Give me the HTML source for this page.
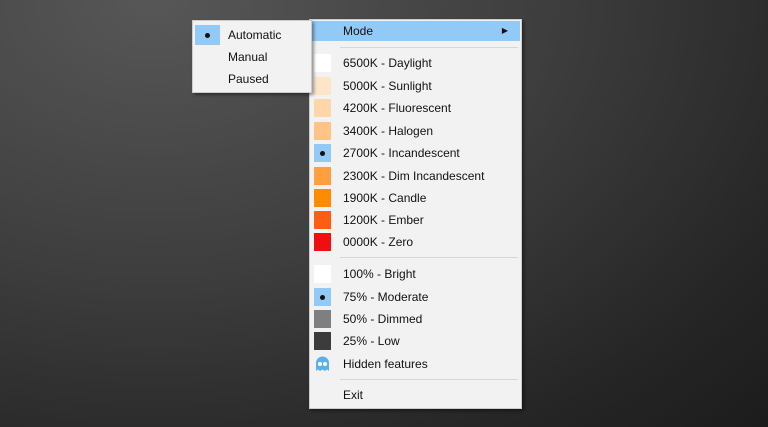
<!DOCTYPE html>
<html><head><style>
body{margin:0;width:768px;height:427px;overflow:hidden;background:radial-gradient(ellipse at 20% 0%,#575757 0%,#3e3e3e 45%,#262626 80%,#1c1c1c 100%);font-family:"Liberation Sans",sans-serif;font-size:12px;color:#111;position:relative}
.m{position:absolute;background:#f2f2f2;border:1px solid #ccc;box-shadow:2px 2px 3px rgba(0,0,0,.4)}
.i{position:absolute;left:0;right:0;height:22px;line-height:22px}
.t{position:absolute;left:33px}
.s{position:absolute;left:4px;top:2px;width:17px;height:18px}
.sel{background:#91c9f7}
.dot::after{content:"";position:absolute;left:6px;top:7px;width:5px;height:5px;border-radius:50%;background:#111}
.sep{position:absolute;left:30px;right:3px;height:1px;background:#d7d7d7}
</style></head><body>
<div class="m" style="left:309px;top:19px;width:211px;height:388px">
<div class="i sel" style="top:1px;left:1px;right:1px;height:20px;line-height:20px"><span class="t" style="left:32px">Mode</span><span style="position:absolute;right:12px;top:0;font-size:8px">&#9654;</span></div>
<div class="sep" style="top:27px"></div>
<div class="i" style="top:32px"><div class="s" style="background:#fff"></div><span class="t">6500K - Daylight</span></div>
<div class="i" style="top:55px"><div class="s" style="background:#fde5c8"></div><span class="t">5000K - Sunlight</span></div>
<div class="i" style="top:77px"><div class="s" style="background:#ffd5aa"></div><span class="t">4200K - Fluorescent</span></div>
<div class="i" style="top:100px"><div class="s" style="background:#ffc485"></div><span class="t">3400K - Halogen</span></div>
<div class="i" style="top:122px"><div class="s sel dot"></div><span class="t">2700K - Incandescent</span></div>
<div class="i" style="top:145px"><div class="s" style="background:#ff9f40"></div><span class="t">2300K - Dim Incandescent</span></div>
<div class="i" style="top:167px"><div class="s" style="background:#ff8c00"></div><span class="t">1900K - Candle</span></div>
<div class="i" style="top:189px"><div class="s" style="background:#ff5c14"></div><span class="t">1200K - Ember</span></div>
<div class="i" style="top:211px"><div class="s" style="background:#ee1010"></div><span class="t">0000K - Zero</span></div>
<div class="sep" style="top:237px"></div>
<div class="i" style="top:243px"><div class="s" style="background:#fff"></div><span class="t">100% - Bright</span></div>
<div class="i" style="top:266px"><div class="s sel dot"></div><span class="t">75% - Moderate</span></div>
<div class="i" style="top:288px"><div class="s" style="background:#7f7f7f"></div><span class="t">50% - Dimmed</span></div>
<div class="i" style="top:310px"><div class="s" style="background:#3c3c3c"></div><span class="t">25% - Low</span></div>
<div class="i" style="top:333px"><svg class="s" viewBox="0 0 17 18"><path d="M2 16V8a6.5 6.5 0 0 1 13 0v8l-2-1.5-2 1.5-2.5-1.5L6 16l-2-1.5z" fill="#5ab0e8"/><circle cx="6" cy="9" r="2" fill="#fff"/><circle cx="11" cy="9" r="2" fill="#fff"/></svg><span class="t">Hidden features</span></div>
<div class="sep" style="top:359px"></div>
<div class="i" style="top:364px"><span class="t">Exit</span></div>
</div>
<div class="m" style="left:192px;top:20px;width:118px;height:71px">
<div class="i" style="top:3px"><div class="s sel dot" style="left:2px;top:1px;width:25px;height:20px"></div><style>.m .i .s.dot[style*="25px"]::after{left:10px;top:8px}</style><span class="t" style="left:35px">Automatic</span></div>
<div class="i" style="top:25px"><span class="t" style="left:35px">Manual</span></div>
<div class="i" style="top:47px"><span class="t" style="left:35px">Paused</span></div>
</div>
</body></html>
